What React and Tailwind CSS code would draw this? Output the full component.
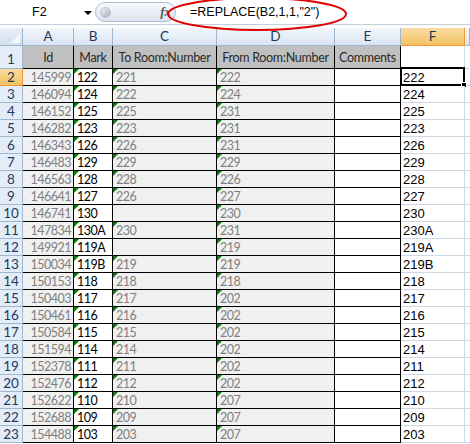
import React from 'react';

const COLS = 'grid grid-cols-[23px_51px_39px_104px_118px_66px_64px_1fr]';
const CELL_FONT = { fontFamily: 'Lato, "Open Sans", sans-serif' };
const ARIAL = { fontFamily: '"Liberation Sans", Arial, sans-serif' };

// id, mark, to room, from room, result in F
const rows = [
    ['145999', '122', '221', '222', '222'],
    ['146094', '124', '222', '224', '224'],
    ['146152', '125', '225', '231', '225'],
    ['146282', '123', '223', '231', '223'],
    ['146343', '126', '226', '231', '226'],
    ['146483', '129', '229', '229', '229'],
    ['146563', '128', '228', '226', '228'],
    ['146641', '127', '226', '227', '227'],
    ['146741', '130', '', '230', '230'],
    ['147834', '130A', '230', '231', '230A'],
    ['149921', '119A', '', '219', '219A'],
    ['150034', '119B', '219', '219', '219B'],
    ['150153', '118', '218', '218', '218'],
    ['150403', '117', '217', '202', '217'],
    ['150461', '116', '216', '202', '216'],
    ['150584', '115', '215', '202', '215'],
    ['151594', '114', '214', '202', '214'],
    ['152378', '111', '211', '202', '211'],
    ['152476', '112', '212', '202', '212'],
    ['152622', '110', '210', '207', '210'],
    ['152688', '109', '209', '207', '209'],
    ['154488', '103', '203', '207', '203'],
];

function Flag() {
    // green "number stored as text" marker
    return (
        <span className="absolute top-0 left-0 w-0 h-0 border-t-[5px] border-t-[#008000] border-r-[5px] border-r-transparent" />
    );
}

function FormulaBar() {
    return (
        <div className="relative flex h-[25px] border-b border-[#c5cfdc] bg-white">
            <div className="w-[95px] relative flex items-center text-[12.5px] text-black" style={ARIAL}>
                <span className="ml-[32px]">F2</span>
                <span className="absolute left-[84px] top-[11px] w-0 h-0 border-l-[4px] border-l-transparent border-r-[4px] border-r-transparent border-t-[4px] border-t-black" />
            </div>
            <div className="w-[81px] my-[2px] rounded-full border border-[#aebbd0] bg-gradient-to-b from-[#f7f9fc] to-[#dde4ee] flex items-center justify-between pl-[4px] pr-[4px]">
                <span className="w-[11px] h-[11px] rounded-full bg-gradient-to-br from-[#f2f2f2] to-[#a9b0ba] border border-[#b8c0cc]" />
                <span className="italic font-bold text-[13px] text-[#55595f]" style={{ fontFamily: '"Liberation Serif", serif' }}>fx</span>
            </div>
            <div className="flex-1 flex items-center pl-[14px] text-[12.5px] text-black" style={ARIAL}>
                =REPLACE(B2,1,1,"2")
            </div>
            <svg className="absolute left-0 top-0 pointer-events-none" width="470" height="34">
                <ellipse cx="257" cy="14" rx="89" ry="16" fill="none" stroke="#e00000" strokeWidth="2" />
            </svg>
        </div>
    );
}

function ColumnHeaders() {
    const blue = 'flex items-center justify-center border-r border-b border-[#9eb6ce] bg-gradient-to-b from-[#f3f7fc] to-[#d9e4f2] text-[#1e3a5f]';
    return (
        <div className={`${COLS} h-[18px] mt-[3px] text-[13.5px] leading-none`} style={CELL_FONT}>
            <div className="relative border-r border-b border-[#9eb6ce] bg-gradient-to-b from-[#e9eff8] to-[#d3deed]">
                <span className="absolute right-[2px] bottom-[2px] w-0 h-0 border-l-[9px] border-l-transparent border-b-[9px] border-b-[#f6f8fb]" />
            </div>
            <div className={blue}>A</div>
            <div className={blue}>B</div>
            <div className={blue}>C</div>
            <div className={blue}>D</div>
            <div className={blue}>E</div>
            <div className="flex items-center justify-center border-r border-b border-[#f29536] bg-gradient-to-b from-[#f9dca3] to-[#f2c25e] text-[#1e3a5f]">F</div>
            <div className={blue} />
        </div>
    );
}

function TitleRow() {
    const head = 'flex items-end justify-center pb-[3px] whitespace-nowrap overflow-hidden bg-[#c0c0c0] border-r border-b border-black text-[#2a2a2a]';
    return (
        <div className={`${COLS} h-[23px] text-[12.5px] leading-[15px] tracking-[-0.3px]`} style={CELL_FONT}>
            <div className="flex items-end justify-center pb-[1px] bg-[#e4ecf7] border-r border-b border-[#9eb6ce] text-[#1e3a5f] text-[13.5px] tracking-normal">1</div>
            <div className={head}>Id</div>
            <div className={head}>Mark</div>
            <div className={head}>To Room:Number</div>
            <div className={head}>From Room:Number</div>
            <div className={head}>Comments</div>
            <div className="bg-white border-r border-[#d0d7e5]" />
            <div className="bg-white border-b border-[#d0d7e5]" />
        </div>
    );
}

function DataRow({ n, r }) {
    const [id, mark, to, from, f] = r;
    const selected = n === 2;
    return (
        <div className={`${COLS} h-[17px] text-[12.5px] leading-[15px] tracking-[-0.5px] whitespace-nowrap`} style={CELL_FONT}>
            <div
                className={
                    selected
                        ? 'flex items-end justify-center border-r border-b border-[#f29536] bg-gradient-to-b from-[#f9dca3] to-[#f2c25e] text-[#1e3a5f] text-[13.5px] tracking-normal'
                        : 'flex items-end justify-center border-r border-b border-[#9eb6ce] bg-[#e4ecf7] text-[#1e3a5f] text-[13.5px] tracking-normal'
                }
            >
                {n}
            </div>
            <div className="flex items-end justify-end pr-[2px] bg-[#f0f0f0] border-r border-b border-black text-[#7f7f7f]">{id}</div>
            <div className="relative flex items-end pl-[3px] bg-white border-r border-b border-black text-black">
                <Flag />
                {mark}
            </div>
            <div className="relative flex items-end pl-[3px] bg-[#f0f0f0] border-r border-b border-black text-[#7f7f7f]">
                {to && <Flag />}
                {to}
            </div>
            <div className="relative flex items-end pl-[3px] bg-[#f0f0f0] border-r border-b border-black text-[#7f7f7f]">
                <Flag />
                {from}
            </div>
            <div className="bg-white border-r border-b border-black" />
            <div className="relative flex items-end pl-[2px] bg-white border-r border-b border-[#d0d7e5] text-[13px] text-black tracking-normal" style={ARIAL}>
                {f}
                {selected && (
                    <span className="absolute -left-[1px] -top-[2px] -right-[1px] -bottom-[1px] border-2 border-black">
                        <span className="absolute -right-[4px] -bottom-[4px] w-[6px] h-[6px] bg-black border border-white" />
                    </span>
                )}
            </div>
            <div className="bg-white border-b border-[#d0d7e5]" />
        </div>
    );
}

export default function App() {
    return (
        <div className="w-[470px] h-[444px] overflow-hidden bg-white">
            <FormulaBar />
            <ColumnHeaders />
            <TitleRow />
            {rows.map((r, i) => (
                <DataRow key={i} n={i + 2} r={r} />
            ))}
        </div>
    );
}
